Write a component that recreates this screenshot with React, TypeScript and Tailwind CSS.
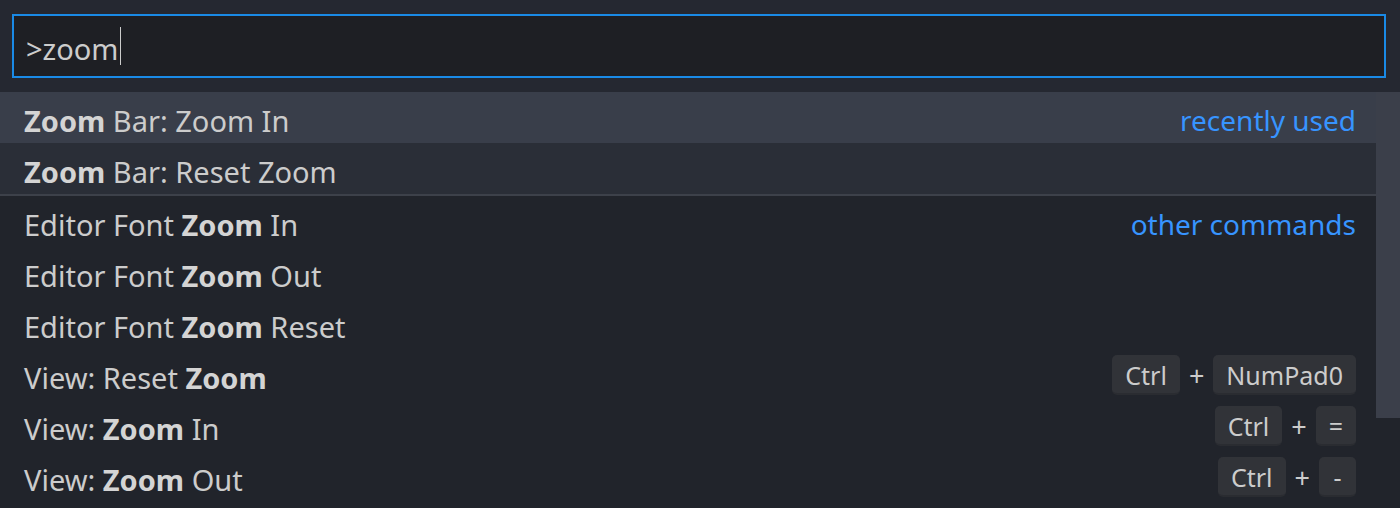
import React from "react";

type Item = {
  parts: { text: string; bold?: boolean }[];
  label?: string;
  keys?: string[];
};

const recent: Item[] = [
  { parts: [{ text: "Zoom", bold: true }, { text: " Bar: Zoom In" }], label: "recently used" },
  { parts: [{ text: "Zoom", bold: true }, { text: " Bar: Reset Zoom" }] },
];

const other: Item[] = [
  { parts: [{ text: "Editor Font " }, { text: "Zoom", bold: true }, { text: " In" }], label: "other commands" },
  { parts: [{ text: "Editor Font " }, { text: "Zoom", bold: true }, { text: " Out" }] },
  { parts: [{ text: "Editor Font " }, { text: "Zoom", bold: true }, { text: " Reset" }] },
  { parts: [{ text: "View: Reset " }, { text: "Zoom", bold: true }], keys: ["Ctrl", "NumPad0"] },
  { parts: [{ text: "View: " }, { text: "Zoom", bold: true }, { text: " In" }], keys: ["Ctrl", "="] },
  { parts: [{ text: "View: " }, { text: "Zoom", bold: true }, { text: " Out" }], keys: ["Ctrl", "-"] },
];

const Row: React.FC<{ item: Item; className?: string }> = ({ item, className }) => (
  <div className={`h-[51px] flex items-center justify-between pl-6 pr-[20px] ${className ?? ""}`}>
    <div className="text-[29px] leading-none pt-[5px] text-[#cccccc] whitespace-pre">
      {item.parts.map((p, i) =>
        p.bold ? (
          <span key={i} className="font-bold text-[#d4d4d4]">
            {p.text}
          </span>
        ) : (
          <span key={i}>{p.text}</span>
        )
      )}
    </div>
    {item.label && <div className="text-[28px] leading-none pt-[5px] text-[#3794ff]">{item.label}</div>}
    {item.keys && (
      <div className="flex items-center gap-[9px] text-[25px]">
        {item.keys.map((k, i) => (
          <React.Fragment key={i}>
            {i > 0 && <span className="text-[#cccccc] text-[27px] pt-[4px]">+</span>}
            <span className="h-10 min-w-[37px] px-[13px] flex items-center justify-center rounded-[5px] bg-[#313338] border-b-2 border-[#2a2c31] text-[#cccccc] leading-none pt-[3px]">
              {k}
            </span>
          </React.Fragment>
        ))}
      </div>
    )}
  </div>
);

export default function App() {
  return (
    <div
      className="w-[1400px] h-[508px] overflow-hidden bg-[#21242b]"
      style={{ fontFamily: '"Noto Sans", "Open Sans", sans-serif' }}
    >
      <div className="bg-[#252831] pt-[14px] pb-[14px] pl-3 pr-[14px]">
        <div className="h-[64px] border-2 border-[#1a8ae6] bg-[#1e1f24] flex items-center pl-[12px]">
          <span className="text-[29px] leading-none pt-[4px] text-[#cccccc]">&gt;zoom</span>
          <span className="w-px h-[38px] bg-[#cccccc] ml-[2px]" />
        </div>
      </div>
      <div className="flex">
        <div className="flex-1">
          <Row item={recent[0]} className="bg-[#393e4a]" />
          <Row item={recent[1]} className="bg-[#2a2e37]" />
          <div className="h-[2px] bg-[#3d414a]" />
          {other.map((it, i) => (
            <Row key={i} item={it} />
          ))}
        </div>
        <div className="w-6 h-[326px] bg-[#3b3f4a]" />
      </div>
    </div>
  );
}
